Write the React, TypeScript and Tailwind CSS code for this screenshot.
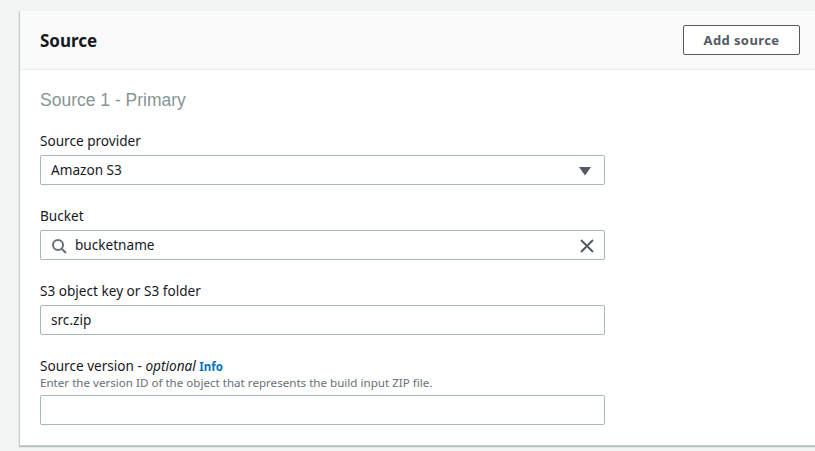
const font = "font-['Noto_Sans','Open_Sans',sans-serif]";

function Field({ label, children }: { label: React.ReactNode; children: React.ReactNode }) {
  return (
    <div className="mt-[20px] first:mt-0">
      <div className="pt-px text-[13.6px] leading-[20px] text-[#16191f] mb-[4px]">{label}</div>
      {children}
    </div>
  );
}

function Box({ children }: { children?: React.ReactNode }) {
  return (
    <div className="w-[565px] h-[30px] flex items-center pt-px px-[10px] bg-white border border-[#aab7b8] rounded-[2px] text-[13.6px] text-[#16191f]">
      {children}
    </div>
  );
}

export default function App() {
  return (
    <div className={`${font} w-[815px] h-[451px] overflow-hidden bg-[#f2f3f3] pt-[11px] pl-[19px]`}>
      <div className="w-[800px] h-[435px] bg-white border-l border-b border-[#c6cccc] shadow-[0_1px_1px_rgba(0,28,36,0.25)]">
        <div className="h-[59px] flex items-center justify-between pl-[20px] pr-[19px] bg-[#fafafa] border-b border-[#eaeded]">
          <h2 className="pt-px text-[17px] font-bold text-[#16191f]">Source</h2>
          <button className="w-[117px] h-[30px] pt-px bg-white border border-[#545b64] rounded-[2px] text-[13px] font-bold text-[#545b64] tracking-[0.4px]">
            Add source
          </button>
        </div>
        <div className="pl-[20px] pt-[19px]">
          <div className="font-['Liberation_Sans',sans-serif] text-[17.5px] leading-[22px] text-[#879596] mb-[19px]">
            Source 1 - Primary
          </div>
          <div>
            <Field label="Source provider">
              <Box>
                <span className="flex-1">Amazon S3</span>
                <svg width="14" height="10" viewBox="0 0 14 10" className="mr-[2px]">
                  <path d="M1 1h12L7 9.5z" fill="#545b64" />
                </svg>
              </Box>
            </Field>
            <Field label="Bucket">
              <Box>
                <svg width="16" height="16" viewBox="0 0 16 16" fill="none" stroke="#687078" strokeWidth="2" className="mr-[8px]">
                  <circle cx="7" cy="7" r="5" />
                  <path d="M10.7 10.7 15 15" />
                </svg>
                <span className="flex-1">bucketname</span>
                <svg width="14" height="14" viewBox="0 0 14 14" fill="none" stroke="#545b64" strokeWidth="2">
                  <path d="M1 1l12 12M13 1 1 13" />
                </svg>
              </Box>
            </Field>
            <Field label="S3 object key or S3 folder">
              <Box>src.zip</Box>
            </Field>
            <div className="mt-[20px]">
              <div className="pt-px text-[13.6px] leading-[19px] text-[#16191f]">
                Source version - <i>optional</i>{" "}
                <span className="text-[11.5px] font-bold text-[#0073bb]">Info</span>
              </div>
              <div className="text-[11.6px] leading-[14px] text-[#687078] mb-[5px]">
                Enter the version ID of the object that represents the build input ZIP file.
              </div>
              <Box />
            </div>
          </div>
        </div>
      </div>
    </div>
  );
}
